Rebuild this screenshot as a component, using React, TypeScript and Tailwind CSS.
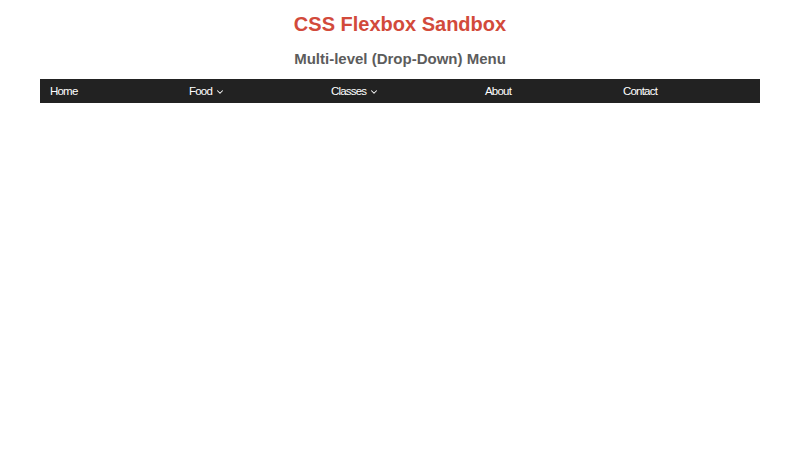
import { ChevronDown } from 'lucide-react'

const items = [
  { label: 'Home', w: 'w-[139px]' },
  { label: 'Food', w: 'w-[142px]', drop: true },
  { label: 'Classes', w: 'w-[154px]', drop: true },
  { label: 'About', w: 'w-[138px]' },
  { label: 'Contact', w: 'flex-1' },
]

export default function App() {
  return (
    <div className="min-h-[450px] bg-white font-['Liberation_Sans',Arial,sans-serif]">
      <h1 className="pt-[11px] text-center text-[20px] font-bold leading-[26px] text-[#d24a3b]">CSS Flexbox Sandbox</h1>
      <h2 className="mt-[12px] text-center text-[15px] font-bold leading-[20px] text-[#5c5c5c]">Multi-level (Drop-Down) Menu</h2>
      <nav className="mx-[40px] mt-[10px] flex h-[24px] items-center bg-[#222222] pt-[2px]">
        {items.map((item) => (
          <div key={item.label} className={`${item.w} flex items-center gap-[3px] pl-[10px] text-[11.5px] tracking-[-0.8px] text-white`}>
            <span>{item.label}</span>
            {item.drop && <ChevronDown className="h-[10px] w-[10px]" strokeWidth={2.5} />}
          </div>
        ))}
      </nav>
    </div>
  )
}
